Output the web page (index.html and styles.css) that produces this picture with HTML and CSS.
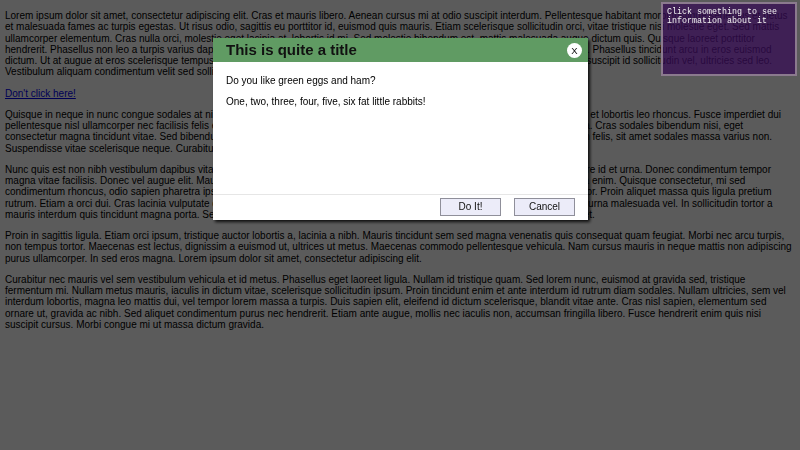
FILE: index.html
```html
<!DOCTYPE html>
<html>
  <head>
    <meta charset="utf-8">
    <title>Modal demo</title>
    <link rel="stylesheet" href="styles.css">
  </head>
  <body>
    <p>Lorem ipsum dolor sit amet, consectetur adipiscing elit. Cras et mauris libero. Aenean cursus mi at odio suscipit interdum. Pellentesque habitant morbi tristique senectus et netus et malesuada fames ac turpis egestas. Ut risus odio, sagittis eu porttitor id, euismod quis mauris. Etiam scelerisque sollicitudin orci, vitae tristique nisi molestie eget. Sed mattis ullamcorper elementum. Cras nulla orci, molestie eget lacinia at, lobortis id mi. Sed molestie bibendum est, mattis malesuada augue dictum quis. Quisque laoreet porttitor hendrerit. Phasellus non leo a turpis varius dapibus. Nam rutrum est eget ante pretium tempor. Praesent vitae nunc et orci blandit id. Phasellus tincidunt arcu in eros euismod dictum. Ut at augue at eros scelerisque tempus. Morbi ut nisi dolor, eget feugiat lacus. Aliquam erat volutpat. Nam dui nisl, et tortor, suscipit id sollicitudin vel, ultricies sed leo. Vestibulum aliquam condimentum velit sed sollicitudin.</p>

    <a href="#">Don't click here!</a>

    <p>Quisque in neque in nunc congue sodales at nisl. Integer ut erat vel nulla porta fermentum. Aenean id enim a quam dapibus tempus et lobortis leo rhoncus. Fusce imperdiet dui pellentesque nisl ullamcorper nec facilisis felis eu, varius ipsum. Mauris sed lorem nec augue pulvinar varius, nec sed at quis magna. Cras sodales bibendum nisi, eget consectetur magna tincidunt vitae. Sed bibendum sapien in tellus dapibus posuere. In hac habitasse platea dictumst. Nam vel ipsum felis, sit amet sodales massa varius non. Suspendisse vitae scelerisque neque. Curabitur vitae velit quis urna eleifend tempor ac at lacus.</p>

    <p>Nunc quis est non nibh vestibulum dapibus vitae. Nulla facilisi. Etiam ac odio in justo gravida congue. Sed ac lacus quis arcu a ornare id et urna. Donec condimentum tempor magna vitae facilisis. Donec vel augue elit. Mauris blandit fringilla tortor, a aliquam erat vestibulum sit amet. Aenean mi quam nunc a enim. Quisque consectetur, mi sed condimentum rhoncus, odio sapien pharetra ipsum, in tempus orci ante a sem. Etiam semper est vitae massa lobortis ut varius auctor. Proin aliquet massa quis ligula pretium rutrum. Etiam a orci dui. Cras lacinia vulputate dui, sed semper nulla tincidunt vitae. Integer in justo id neque cursus nec nisi eget in urna malesuada vel. In sollicitudin tortor a mauris interdum quis tincidunt magna porta. Sed in lectus nec dui posuere. Nulla et mi fringilla hendrerit, ut feugiat nisl quis blandit et.</p>

    <p>Proin in sagittis ligula. Etiam orci ipsum, tristique auctor lobortis a, lacinia a nibh. Mauris tincidunt sem sed magna venenatis quis consequat quam feugiat. Morbi nec arcu turpis, non tempus tortor. Maecenas est lectus, dignissim a euismod ut, ultrices ut metus. Maecenas commodo pellentesque vehicula. Nam cursus mauris in neque mattis non adipiscing purus ullamcorper. In sed eros magna. Lorem ipsum dolor sit amet, consectetur adipiscing elit.</p>

    <p>Curabitur nec mauris vel sem vestibulum vehicula et id metus. Phasellus eget laoreet ligula. Nullam id tristique quam. Sed lorem nunc, euismod at gravida sed, tristique fermentum mi. Nullam metus mauris, iaculis in dictum vitae, scelerisque sollicitudin ipsum. Proin tincidunt enim et ante interdum id rutrum diam sodales. Nullam ultricies, sem vel interdum lobortis, magna leo mattis dui, vel tempor lorem massa a turpis. Duis sapien elit, eleifend id dictum scelerisque, blandit vitae ante. Cras nisl sapien, elementum sed ornare ut, gravida ac nibh. Sed aliquet condimentum purus nec hendrerit. Etiam ante augue, mollis nec iaculis non, accumsan fringilla libero. Fusce hendrerit enim quis nisi suscipit cursus. Morbi congue mi ut massa dictum gravida.</p>

    <!-- dim layer behind the dialog -->
    <div class="overlay"></div>

    <div class="modal">
      <div class="modal-head">
        <h2>This is quite a title</h2>
        <button type="button" class="modal-close">X</button>
      </div>
      <div class="modal-body">
        <p>Do you like green eggs and ham?</p>
        <p>One, two, three, four, five, six fat little rabbits!</p>
      </div>
      <div class="modal-foot">
        <button type="button" class="btn">Do It!</button>
        <button type="button" class="btn">Cancel</button>
      </div>
    </div>

    <div class="info">Click something to see information about it</div>
  </body>
</html>
```

FILE: styles.css
```css
body{margin:0;padding:0 5px;font-family:'Liberation Sans',Arial,sans-serif;font-size:10px;line-height:11.25px;color:#000;background:#fff}
p{margin:10px 0}
a{color:#0000ee}
button{font-family:inherit;font-size:inherit;line-height:inherit;margin:0;cursor:pointer}

.overlay{position:fixed;top:0;left:0;right:0;bottom:0;background:rgba(0,0,0,0.645)}

.modal{position:fixed;top:38px;left:50%;width:375px;height:182px;margin-left:-187px;display:flex;flex-direction:column;
  background:#fff;box-shadow:2px 2px 3px rgba(0,0,0,0.85)}
.modal-head{display:flex;align-items:center;justify-content:space-between;height:24px;padding:0 6px 0 13px;background:#609b63}
.modal-head h2{margin:0;font-size:15px;line-height:18px;font-weight:bold;color:#111}
.modal-close{width:15px;height:15px;padding:0;border:0;border-radius:50%;background:#fff;color:#111;font-size:9.5px;line-height:15px;text-align:center}
.modal-body{flex:1;padding:2.5px 13px}
.modal-foot{display:flex;justify-content:flex-end;gap:13px;padding:3px 13px 4px;border-top:1px solid #e6e6e6}
.btn{width:61px;height:18px;padding:0;border:1px solid #8f8f9a;background:#ececf9;color:#111;font-size:10px}

.info{position:fixed;top:2px;right:3px;width:136px;height:74px;box-sizing:border-box;padding:4px 4px;
  border:2px solid #8b7a8e;background:rgba(53,12,83,0.75);color:#f2f2f2;
  font-family:'Liberation Mono','Courier New',monospace;font-size:8.33px;line-height:9px}
```
